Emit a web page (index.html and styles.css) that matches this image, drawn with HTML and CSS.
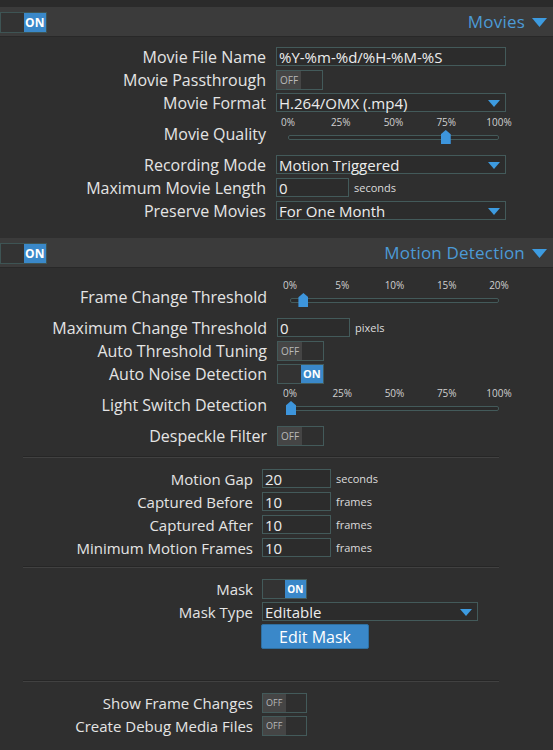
FILE: index.html
```html
<!DOCTYPE html>
<html>
<head>
<meta charset="utf-8">
<link rel="stylesheet" href="styles.css">
</head>
<body>
<div class="strip"></div>

<section class="sec">
  <header class="sec-head">
    <span class="toggle head-toggle on"><span class="half left"></span><span class="half right">ON</span></span>
    <span class="sec-title">Movies <svg class="caret" width="15" height="9" viewBox="0 0 15 9"><polygon points="0,0 15,0 7.5,9" fill="#3d9be0"/></svg></span>
  </header>
  <div class="sec-body movies">
    <div class="row">
      <span class="lbl">Movie File Name</span>
      <span class="val"><span class="input wide">%Y-%m-%d/%H-%M-%S</span></span>
    </div>
    <div class="row">
      <span class="lbl">Movie Passthrough</span>
      <span class="val"><span class="toggle off"><span class="half left">OFF</span><span class="half right"></span></span></span>
    </div>
    <div class="row">
      <span class="lbl">Movie Format</span>
      <span class="val"><span class="input wide select">H.264/OMX (.mp4)<svg class="dd" width="12" height="7" viewBox="0 0 12 7"><polygon points="0,0 12,0 6,7" fill="#3d9be0"/></svg></span></span>
    </div>
    <div class="row slider-row">
      <span class="lbl">Movie Quality</span>
      <div class="slider">
        <div class="ticks"><span>0%</span><span>25%</span><span>50%</span><span>75%</span><span>100%</span></div>
        <div class="track"><span class="thumb" style="left:75%"></span></div>
      </div>
    </div>
    <div class="row">
      <span class="lbl">Recording Mode</span>
      <span class="val"><span class="input wide select">Motion Triggered<svg class="dd" width="12" height="7" viewBox="0 0 12 7"><polygon points="0,0 12,0 6,7" fill="#3d9be0"/></svg></span></span>
    </div>
    <div class="row">
      <span class="lbl">Maximum Movie Length</span>
      <span class="val"><span class="input short">0</span><span class="unit">seconds</span></span>
    </div>
    <div class="row">
      <span class="lbl">Preserve Movies</span>
      <span class="val"><span class="input wide select">For One Month<svg class="dd" width="12" height="7" viewBox="0 0 12 7"><polygon points="0,0 12,0 6,7" fill="#3d9be0"/></svg></span></span>
    </div>
  </div>
</section>

<section class="sec">
  <header class="sec-head">
    <span class="toggle head-toggle on"><span class="half left"></span><span class="half right">ON</span></span>
    <span class="sec-title">Motion Detection <svg class="caret" width="15" height="9" viewBox="0 0 15 9"><polygon points="0,0 15,0 7.5,9" fill="#3d9be0"/></svg></span>
  </header>
  <div class="sec-body motion">
    <div class="group g1">
      <div class="row slider-row">
        <span class="lbl">Frame Change Threshold</span>
        <div class="slider">
          <div class="ticks"><span>0%</span><span>5%</span><span>10%</span><span>15%</span><span>20%</span></div>
          <div class="track"><span class="thumb" style="left:6%"></span></div>
        </div>
      </div>
      <div class="row">
        <span class="lbl">Maximum Change Threshold</span>
        <span class="val"><span class="input short">0</span><span class="unit">pixels</span></span>
      </div>
      <div class="row">
        <span class="lbl">Auto Threshold Tuning</span>
        <span class="val"><span class="toggle off"><span class="half left">OFF</span><span class="half right"></span></span></span>
      </div>
      <div class="row">
        <span class="lbl">Auto Noise Detection</span>
        <span class="val"><span class="toggle on"><span class="half left"></span><span class="half right">ON</span></span></span>
      </div>
      <div class="row slider-row">
        <span class="lbl">Light Switch Detection</span>
        <div class="slider">
          <div class="ticks"><span>0%</span><span>25%</span><span>50%</span><span>75%</span><span>100%</span></div>
          <div class="track"><span class="thumb" style="left:0%"></span></div>
        </div>
      </div>
      <div class="row">
        <span class="lbl">Despeckle Filter</span>
        <span class="val"><span class="toggle off"><span class="half left">OFF</span><span class="half right"></span></span></span>
      </div>
    </div>

    <hr class="sep sep1">

    <div class="group g2">
      <div class="row">
        <span class="lbl">Motion Gap</span>
        <span class="val"><span class="input num">20</span><span class="unit">seconds</span></span>
      </div>
      <div class="row">
        <span class="lbl">Captured Before</span>
        <span class="val"><span class="input num">10</span><span class="unit">frames</span></span>
      </div>
      <div class="row">
        <span class="lbl">Captured After</span>
        <span class="val"><span class="input num">10</span><span class="unit">frames</span></span>
      </div>
      <div class="row">
        <span class="lbl">Minimum Motion Frames</span>
        <span class="val"><span class="input num">10</span><span class="unit">frames</span></span>
      </div>
    </div>

    <hr class="sep sep2">

    <div class="group g2">
      <div class="row">
        <span class="lbl">Mask</span>
        <span class="val"><span class="toggle on sm"><span class="half left"></span><span class="half right">ON</span></span></span>
      </div>
      <div class="row">
        <span class="lbl">Mask Type</span>
        <span class="val"><span class="input mask select">Editable<svg class="dd" width="12" height="7" viewBox="0 0 12 7"><polygon points="0,0 12,0 6,7" fill="#3d9be0"/></svg></span></span>
      </div>
      <div class="row btn-row">
        <span class="lbl"></span>
        <span class="val"><button class="btn">Edit Mask</button></span>
      </div>
    </div>

    <hr class="sep sep3">

    <div class="group g2">
      <div class="row">
        <span class="lbl">Show Frame Changes</span>
        <span class="val"><span class="toggle off sm"><span class="half left">OFF</span><span class="half right"></span></span></span>
      </div>
      <div class="row">
        <span class="lbl">Create Debug Media Files</span>
        <span class="val"><span class="toggle off sm"><span class="half left">OFF</span><span class="half right"></span></span></span>
      </div>
    </div>
  </div>
</section>
</body>
</html>
```

FILE: styles.css
```css
* { box-sizing: border-box; }
html, body { margin: 0; padding: 0; }
body {
  background: #2f2f2f;
  color: #e4e4e4;
  font-family: "Open Sans", "DejaVu Sans", sans-serif;
  font-size: 16px;
  width: 553px;
  height: 750px;
  overflow: hidden;
}
.strip { height: 7px; background: #2b2b2b; }

.sec-head {
  height: 30px;
  background: #3b3b3b;
  border-bottom: 1px solid #282828;
  display: flex;
  align-items: center;
  justify-content: space-between;
  padding-right: 6px;
}
.sec-title {
  color: #4c9ad6;
  font-size: 17px;
  display: flex;
  align-items: center;
  gap: 7px;
  letter-spacing: 0.2px;
}
.caret { display: block; margin-top: 1px; }

.sec-body.movies { padding: 8px 0 16px; --lw: 266px; --gap: 10px; }
.sec-body.motion { padding: 9px 0 0; }
.g1 { --lw: 267px; --gap: 10px; }
.g2 { --lw: 253px; --gap: 9px; font-size: 15px; }

.row {
  display: grid;
  grid-template-columns: var(--lw) auto;
  column-gap: var(--gap);
  align-items: center;
  height: 23px;
}
.lbl {
  text-align: right;
  white-space: nowrap;
  line-height: 18px;
}
.val { display: flex; align-items: center; gap: 5px; }

.input {
  display: flex;
  align-items: center;
  height: 19px;
  border: 1px solid #435a5a;
  background: #2c2c2c;
  color: #ececec;
  font-size: 15px;
  padding: 0 2px;
  white-space: nowrap;
  position: relative;
}
.input.wide { width: 230px; }
.input.short { width: 73px; }
.input.num { width: 69px; }
.input.mask { width: 216px; }
.input.select .dd { position: absolute; right: 5px; top: 6px; }
.unit { font-size: 11px; color: #dcdcdc; }

.toggle {
  display: flex;
  width: 47px;
  height: 20px;
  border: 1px solid #435a5a;
  background: #2f2f2f;
}
.toggle.sm { width: 45px; }
.toggle .half {
  flex: 1;
  display: flex;
  align-items: center;
  justify-content: center;
  font-size: 10px;
}
.toggle.off .left { background: #454545; color: #b8b8b8; justify-content: flex-start; padding-left: 3px; }
.toggle.on .left { background: #333333; }
.toggle.on .right { background: #3a88c9; color: #ffffff; font-weight: 700; font-size: 11px; }
.toggle.sm .half { font-size: 9px; }
.toggle.sm.on .right { font-size: 10px; }
.head-toggle { height: 21px; width: 47px; border-color: #3e5454; margin-top: 1px; }
.head-toggle .right { font-size: 12px !important; }

.slider-row { height: 39px; align-items: start; }
.slider-row .lbl { margin-top: 11px; }
.slider { padding-left: 12px; padding-top: 1px; }
.g1 .slider { padding-left: 13px; }
.ticks {
  width: 211px;
  height: 14px;
  display: flex;
  justify-content: space-between;
  font-size: 10px;
  line-height: 14px;
  color: #d0d0d0;
}
.g1 .ticks, .g1 .track { width: 209px; }
.ticks span { width: 0; display: flex; justify-content: center; white-space: nowrap; }
.track {
  position: relative;
  width: 211px;
  height: 5px;
  margin-top: 6px;
  border: 1px solid #435a5a;
  border-radius: 2px;
  background: #2a2a2a;
}
.thumb {
  position: absolute;
  top: -6px;
  width: 10px;
  height: 14px;
  margin-left: -5px;
  background: #3d95dc;
  clip-path: polygon(50% 0, 100% 30%, 100% 100%, 0 100%, 0 30%);
}

.sep {
  margin: 9px 54px 9px 23px;
  height: 2px;
  border: 0;
  border-top: 1px solid #262626;
  border-bottom: 1px solid #414141;
}
.sep2 { margin-top: 7px; }
.sep3 { margin-top: 31px; }

.btn-row { height: 26px; align-items: end; }
.btn {
  width: 108px;
  height: 25px;
  background: #3a88c9;
  border: 1px solid #2f6f9f;
  border-radius: 2px;
  color: #ffffff;
  font-family: "Open Sans", "DejaVu Sans", sans-serif;
  font-size: 16px;
  padding: 0;
  margin-left: -1px;
}
```
